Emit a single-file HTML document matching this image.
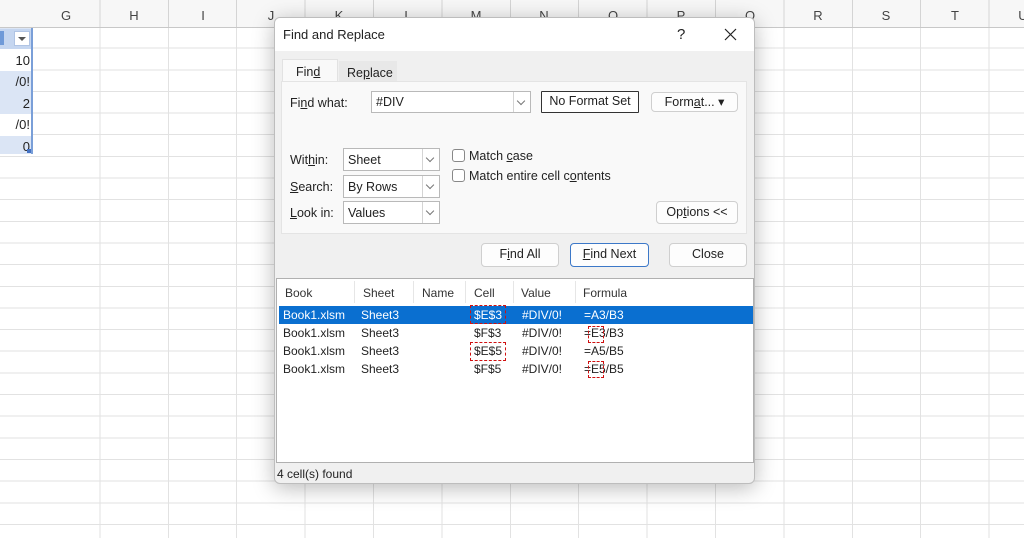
<!DOCTYPE html>
<html><head><meta charset="utf-8"><style>
*{box-sizing:border-box;margin:0;padding:0}
body{width:1024px;height:538px;overflow:hidden;background:#fff;font-family:"Liberation Sans",sans-serif;font-size:12px;color:#222;position:relative}
.grid{position:absolute;left:0;top:27px;width:1024px;height:511px;
background-image:repeating-linear-gradient(to bottom,transparent 0,transparent 20.65px,#e2e2e2 20.65px,#e2e2e2 21.65px),
repeating-linear-gradient(to right,transparent 0,transparent 67.4px,#e2e2e2 67.4px,#e2e2e2 68.4px);
background-position:0 0,32px 0}
.hdr{position:absolute;left:0;top:0;width:1024px;height:28px;background:#f7f7f7;border-bottom:1px solid #c8c8c8;
background-image:repeating-linear-gradient(to right,transparent 0,transparent 67.4px,#d4d4d4 67.4px,#d4d4d4 68.4px);background-position:32px 0}
.hl{position:absolute;top:8px;font-size:13px;color:#444;width:68px;text-align:center}
.c{position:absolute;font-size:13px;right:994px;text-align:right}
.dlg{position:absolute;left:274px;top:17px;width:481px;height:467px;background:#f0f0f0;border:1px solid #bdbdbd;border-radius:6px;box-shadow:0 4px 22px rgba(0,0,0,.28);overflow:hidden}
.tb{height:33px;background:#fff;position:relative}
.t{position:absolute;font-size:13px}
.box{position:absolute;background:#fff;border:1px solid #b9b9b9}
.btn{position:absolute;background:#fdfdfd;border:1px solid #cfcfcf;border-radius:4px;text-align:center;font-size:12.5px;line-height:21px}
.dd{position:absolute;right:0;top:0;width:17px;height:100%;border-left:1px solid #d4d4d4}
.dd:after{content:"";position:absolute;left:4px;top:6px;width:5px;height:5px;border-right:1px solid #777;border-bottom:1px solid #777;transform:rotate(45deg)}
.cb{position:absolute;width:13px;height:13px;border:1px solid #888;border-radius:3px;background:#fff}
.row{position:absolute;left:2px;width:474px;height:18px;font-size:12px;line-height:18px}
.row span{position:absolute}
.red{position:absolute;border:1.5px dashed #d01010}
u{text-decoration:underline}
</style></head><body>
<div class="grid"></div>
<div class="hdr"></div>
<div class="hl" style="left:32px">G</div><div class="hl" style="left:100px">H</div><div class="hl" style="left:169px">I</div><div class="hl" style="left:237px">J</div><div class="hl" style="left:305px">K</div><div class="hl" style="left:374px">L</div><div class="hl" style="left:442px">M</div><div class="hl" style="left:510px">N</div><div class="hl" style="left:579px">O</div><div class="hl" style="left:647px">P</div><div class="hl" style="left:716px">Q</div><div class="hl" style="left:784px">R</div><div class="hl" style="left:852px">S</div><div class="hl" style="left:921px">T</div><div class="hl" style="left:989px">U</div>
<div style="position:absolute;left:0;top:28px;width:31px;height:126px;background:#dbe5f5"></div>
<div style="position:absolute;left:0;top:49px;width:31px;height:22px;background:#fff"></div>
<div style="position:absolute;left:0;top:114px;width:31px;height:22px;background:#fff"></div>
<div style="position:absolute;left:0;top:29px;width:31px;height:20px;background:#c5d6f0"></div>
<div style="position:absolute;left:14px;top:31px;width:16px;height:15px;background:#fff;border:1px solid #b0c4e4"></div>
<div style="position:absolute;left:18px;top:37px;border-left:4px solid transparent;border-right:4px solid transparent;border-top:4px solid #555"></div>
<div style="position:absolute;left:0;top:31px;font-size:13px;color:#fff;background:#6f9ad8;width:4px;height:14px"></div>
<div style="position:absolute;left:31px;top:28px;width:2px;height:126px;background:#7a9fd8"></div>
<div class="c" style="top:53px">10</div><div class="c" style="top:74px">/0!</div><div class="c" style="top:96px">2</div><div class="c" style="top:117px">/0!</div><div class="c" style="top:139px">0</div>
<div style="position:absolute;left:27px;top:149px;width:4px;height:4px;background:#4472c4"></div>

<div class="dlg">
<div class="tb"><div class="t" style="left:8px;top:9px">Find and Replace</div><div class="t" style="left:402px;top:8px;font-size:15px">?</div>
<svg style="position:absolute;left:449px;top:10px" width="13" height="13" viewBox="0 0 13 13"><path d="M1 1L12 12M12 1L1 12" stroke="#222" stroke-width="1.2"/></svg></div>
<div style="position:absolute;left:7px;top:41px;width:56px;height:24px;background:#f9f9f9;border:1px solid #e2e2e2;border-bottom:none"></div>
<div class="t" style="left:21px;top:47px;font-size:12.5px">Fin<u>d</u></div>
<div style="position:absolute;left:64px;top:43px;width:58px;height:21px;background:#e8e8e8"></div>
<div class="t" style="left:72px;top:48px;font-size:12.5px">Re<u>p</u>lace</div>
<div style="position:absolute;left:6px;top:63px;width:466px;height:153px;background:#f9f9f9;border:1px solid #e4e4e4"></div>
<div class="t" style="left:15px;top:78px;font-size:12.5px">Fi<u>n</u>d what:</div>
<div class="box" style="left:96px;top:73px;width:160px;height:22px"><span class="t" style="left:4px;top:3px;font-size:12.5px">#DIV</span><div class="dd"></div></div>
<div class="btn" style="left:266px;top:73px;width:98px;height:22px;border:1.5px solid #333;border-radius:1px;background:#fff;line-height:19px">No Format Set</div>
<div class="btn" style="left:376px;top:74px;width:87px;height:20px;line-height:18px">Form<u>a</u>t... ▾</div>
<div class="t" style="left:15px;top:135px;font-size:12.5px">Wit<u>h</u>in:</div>
<div class="t" style="left:15px;top:162px;font-size:12.5px"><u>S</u>earch:</div>
<div class="t" style="left:15px;top:188px;font-size:12.5px"><u>L</u>ook in:</div>
<div class="box" style="left:68px;top:130px;width:97px;height:23px"><span class="t" style="left:4px;top:4px;font-size:12.5px">Sheet</span><div class="dd"></div></div>
<div class="box" style="left:68px;top:157px;width:97px;height:23px"><span class="t" style="left:4px;top:4px;font-size:12.5px">By Rows</span><div class="dd"></div></div>
<div class="box" style="left:68px;top:183px;width:97px;height:23px"><span class="t" style="left:4px;top:4px;font-size:12.5px">Values</span><div class="dd"></div></div>
<div class="cb" style="left:177px;top:131px"></div><div class="t" style="left:194px;top:131px;font-size:12.5px">Match <u>c</u>ase</div>
<div class="cb" style="left:177px;top:151px"></div><div class="t" style="left:194px;top:151px;font-size:12.5px">Match entire cell c<u>o</u>ntents</div>
<div class="btn" style="left:381px;top:183px;width:82px;height:23px">Op<u>t</u>ions &lt;&lt;</div>
<div class="btn" style="left:206px;top:225px;width:78px;height:24px">F<u>i</u>nd All</div>
<div class="btn" style="left:295px;top:225px;width:79px;height:24px;border:1.5px solid #3c78c8"><u>F</u>ind Next</div>
<div class="btn" style="left:394px;top:225px;width:78px;height:24px">Close</div>
<div style="position:absolute;left:1px;top:260px;width:478px;height:185px;background:#fff;border:1px solid #b0b0b0">
 <div class="row" style="top:5px;color:#333"><span style="left:6px">Book</span><span style="left:84px">Sheet</span><span style="left:143px">Name</span><span style="left:195px">Cell</span><span style="left:242px">Value</span><span style="left:304px">Formula</span></div>
 <div style="position:absolute;left:77px;top:2px;width:1px;height:22px;background:#e6e6e6"></div>
 <div style="position:absolute;left:136px;top:2px;width:1px;height:22px;background:#e6e6e6"></div>
 <div style="position:absolute;left:188px;top:2px;width:1px;height:22px;background:#e6e6e6"></div>
 <div style="position:absolute;left:236px;top:2px;width:1px;height:22px;background:#e6e6e6"></div>
 <div style="position:absolute;left:298px;top:2px;width:1px;height:22px;background:#e6e6e6"></div>
 <div class="row" style="top:27px;background:#0a6fd0;color:#fff"><span style="left:4px">Book1.xlsm</span><span style="left:82px">Sheet3</span><span style="left:195px">$E$3</span><span style="left:243px">#DIV/0!</span><span style="left:305px">=A3/B3</span></div>
 <div class="row" style="top:45px"><span style="left:4px">Book1.xlsm</span><span style="left:82px">Sheet3</span><span style="left:195px">$F$3</span><span style="left:243px">#DIV/0!</span><span style="left:305px">=E3/B3</span></div>
 <div class="row" style="top:63px"><span style="left:4px">Book1.xlsm</span><span style="left:82px">Sheet3</span><span style="left:195px">$E$5</span><span style="left:243px">#DIV/0!</span><span style="left:305px">=A5/B5</span></div>
 <div class="row" style="top:81px"><span style="left:4px">Book1.xlsm</span><span style="left:82px">Sheet3</span><span style="left:195px">$F$5</span><span style="left:243px">#DIV/0!</span><span style="left:305px">=E5/B5</span></div>
 <div class="red" style="left:193px;top:26px;width:36px;height:19px"></div>
 <div class="red" style="left:193px;top:63px;width:36px;height:19px"></div>
 <div class="red" style="left:311px;top:47px;width:16px;height:17px"></div>
 <div class="red" style="left:311px;top:82px;width:16px;height:17px"></div>
</div>
<div class="t" style="left:2px;top:449px;font-size:12px">4 cell(s) found</div>
</div>
</body></html>
